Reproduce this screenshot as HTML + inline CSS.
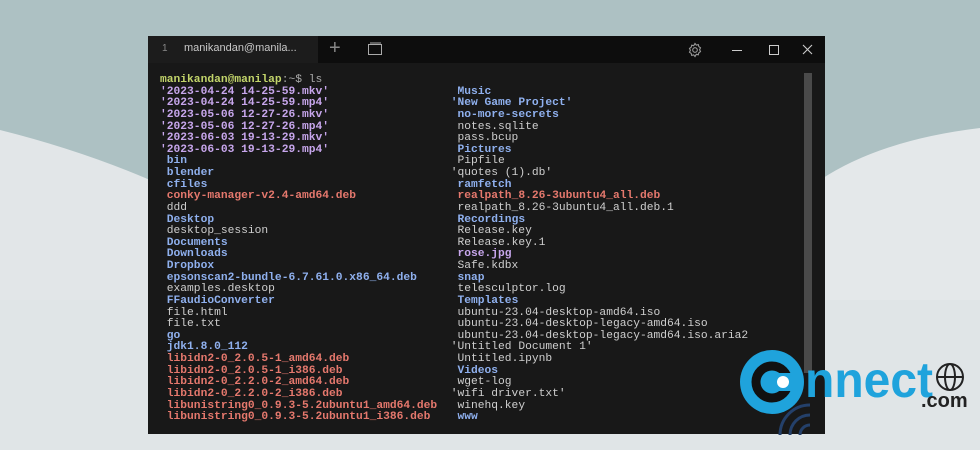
<!DOCTYPE html>
<html><head><meta charset="utf-8"><style>
html,body{margin:0;padding:0;width:980px;height:450px;overflow:hidden;background:#adc1c3;}
.bg{position:absolute;left:0;top:0}
.win{position:absolute;left:148px;top:36px;width:677px;height:398px;background:#181818;}
.tb{position:absolute;left:0;top:0;width:677px;height:27px;background:#0d0d0d;}
.tab{position:absolute;left:0;top:0;width:170px;height:27px;background:#1c1c1c;color:#c8c8c8;font:11px "Liberation Sans",sans-serif;}
.term{position:absolute;left:12px;top:39px;font-family:"Liberation Mono",monospace;font-size:11.27px;line-height:11.62px;white-space:pre;color:#cfcfcf;}
.p{color:#c7a6ec;font-weight:bold}
.b{color:#8fb0ee;font-weight:bold}
.r{color:#e5786d;font-weight:bold}
.g{color:#c2d46a;font-weight:bold}
.sb{position:absolute;left:656px;top:37px;width:8px;height:300px;background:#4a4a4a;}
</style></head><body>
<svg class="bg" width="980" height="450"><rect width="980" height="450" fill="#adc1c3"/>
<path d="M0 130 Q80 150 150 180 L150 450 L0 450Z" fill="#e2e6e8"/>
<path d="M820 180 Q880 140 980 128 L980 450 L820 450Z" fill="#e4e8ea"/>
<rect x="0" y="300" width="980" height="150" fill="#e0e5e7"/>
</svg>
<div class="win">
<div class="tb">
<div class="tab"><span style="position:absolute;left:14px;top:7px;color:#888;font-size:10px">1</span><span style="position:absolute;left:36px;top:6px">manikandan@manila...</span></div>
<span style="position:absolute;left:181px;top:1px;color:#888;font:20px 'Liberation Sans',sans-serif">+</span>
<svg style="position:absolute;left:219px;top:6px" width="16" height="14"><rect x="1.5" y="2.5" width="13" height="10" fill="none" stroke="#aaa"/><line x1="3" y1="1" x2="14" y2="1" stroke="#aaa"/></svg>
<svg style="position:absolute;left:539px;top:6px" width="16" height="16" fill="none" stroke="#999" stroke-width="1.1"><circle cx="8" cy="8" r="2.3"/><path d="M8 1.5l1.3 1.6 2-.5.5 2 1.7 1.2-.9 1.9.9 1.9-1.7 1.2-.5 2-2-.5L8 14.5l-1.3-1.6-2 .5-.5-2L2.5 10.2 3.4 8.3 2.5 6.4l1.7-1.2.5-2 2 .5z"/></svg>
<div style="position:absolute;left:584px;top:14px;width:10px;height:1px;background:#ccc"></div>
<div style="position:absolute;left:621px;top:9px;width:8px;height:8px;border:1px solid #ccc"></div>
<svg style="position:absolute;left:654px;top:8px" width="11" height="11"><path d="M1 1L10 10M10 1L1 10" stroke="#ccc" stroke-width="1.1"/></svg>
</div>
<div class="sb"></div>
<div class="term"><span class="g">manikandan@manilap</span><span style="color:#aaa">:~$ ls</span>
<span class="p">'2023-04-24 14-25-59.mkv'</span>                   <span class="b">Music</span>
<span class="p">'2023-04-24 14-25-59.mp4'</span>                  <span class="b">'New Game Project'</span>
<span class="p">'2023-05-06 12-27-26.mkv'</span>                   <span class="b">no-more-secrets</span>
<span class="p">'2023-05-06 12-27-26.mp4'</span>                   notes.sqlite
<span class="p">'2023-06-03 19-13-29.mkv'</span>                   pass.bcup
<span class="p">'2023-06-03 19-13-29.mp4'</span>                   <span class="b">Pictures</span>
 <span class="b">bin</span>                                        Pipfile
 <span class="b">blender</span>                                   'quotes (1).db'
 <span class="b">cfiles</span>                                     <span class="b">ramfetch</span>
 <span class="r">conky-manager-v2.4-amd64.deb</span>               <span class="r">realpath_8.26-3ubuntu4_all.deb</span>
 ddd                                        realpath_8.26-3ubuntu4_all.deb.1
 <span class="b">Desktop</span>                                    <span class="b">Recordings</span>
 desktop_session                            Release.key
 <span class="b">Documents</span>                                  Release.key.1
 <span class="b">Downloads</span>                                  <span class="p">rose.jpg</span>
 <span class="b">Dropbox</span>                                    Safe.kdbx
 <span class="b">epsonscan2-bundle-6.7.61.0.x86_64.deb</span>      <span class="b">snap</span>
 examples.desktop                           telesculptor.log
 <span class="b">FFaudioConverter</span>                           <span class="b">Templates</span>
 file.html                                  ubuntu-23.04-desktop-amd64.iso
 file.txt                                   ubuntu-23.04-desktop-legacy-amd64.iso
 <span class="b">go</span>                                         ubuntu-23.04-desktop-legacy-amd64.iso.aria2
 <span class="b">jdk1.8.0_112</span>                              'Untitled Document 1'
 <span class="r">libidn2-0_2.0.5-1_amd64.deb</span>                Untitled.ipynb
 <span class="r">libidn2-0_2.0.5-1_i386.deb</span>                 <span class="b">Videos</span>
 <span class="r">libidn2-0_2.2.0-2_amd64.deb</span>                wget-log
 <span class="r">libidn2-0_2.2.0-2_i386.deb</span>                'wifi driver.txt'
 <span class="r">libunistring0_0.9.3-5.2ubuntu1_amd64.deb</span>   winehq.key
 <span class="r">libunistring0_0.9.3-5.2ubuntu1_i386.deb</span>    <span class="b">www</span></div>
</div>
<svg style="position:absolute;left:735px;top:345px" width="240" height="100">
<circle cx="37" cy="37" r="32" fill="#1fa3dc"/>
<circle cx="37" cy="37" r="16" fill="none" stroke="#111" stroke-width="9"/>
<rect x="40" y="28" width="20" height="18" fill="#1fa3dc"/>
<circle cx="48" cy="37" r="6" fill="#fff"/>
<path d="M45 90a30 30 0 0 1 30-30M55 90a20 20 0 0 1 20-20M65 90a10 10 0 0 1 10-10" stroke="#24406a" stroke-width="3" fill="none"/>
<text x="70" y="52" font-family="Liberation Sans,sans-serif" font-weight="bold" font-size="50" fill="#1fa3dc" textLength="128" lengthAdjust="spacingAndGlyphs">nnect</text>
<g fill="none" stroke="#222" stroke-width="2"><circle cx="215" cy="32" r="13"/><ellipse cx="215" cy="32" rx="5" ry="13"/><line x1="202" y1="32" x2="228" y2="32"/></g>
<text x="186" y="62" font-family="Liberation Sans,sans-serif" font-weight="bold" font-size="20" fill="#222">.com</text>
</svg>
</body></html>
